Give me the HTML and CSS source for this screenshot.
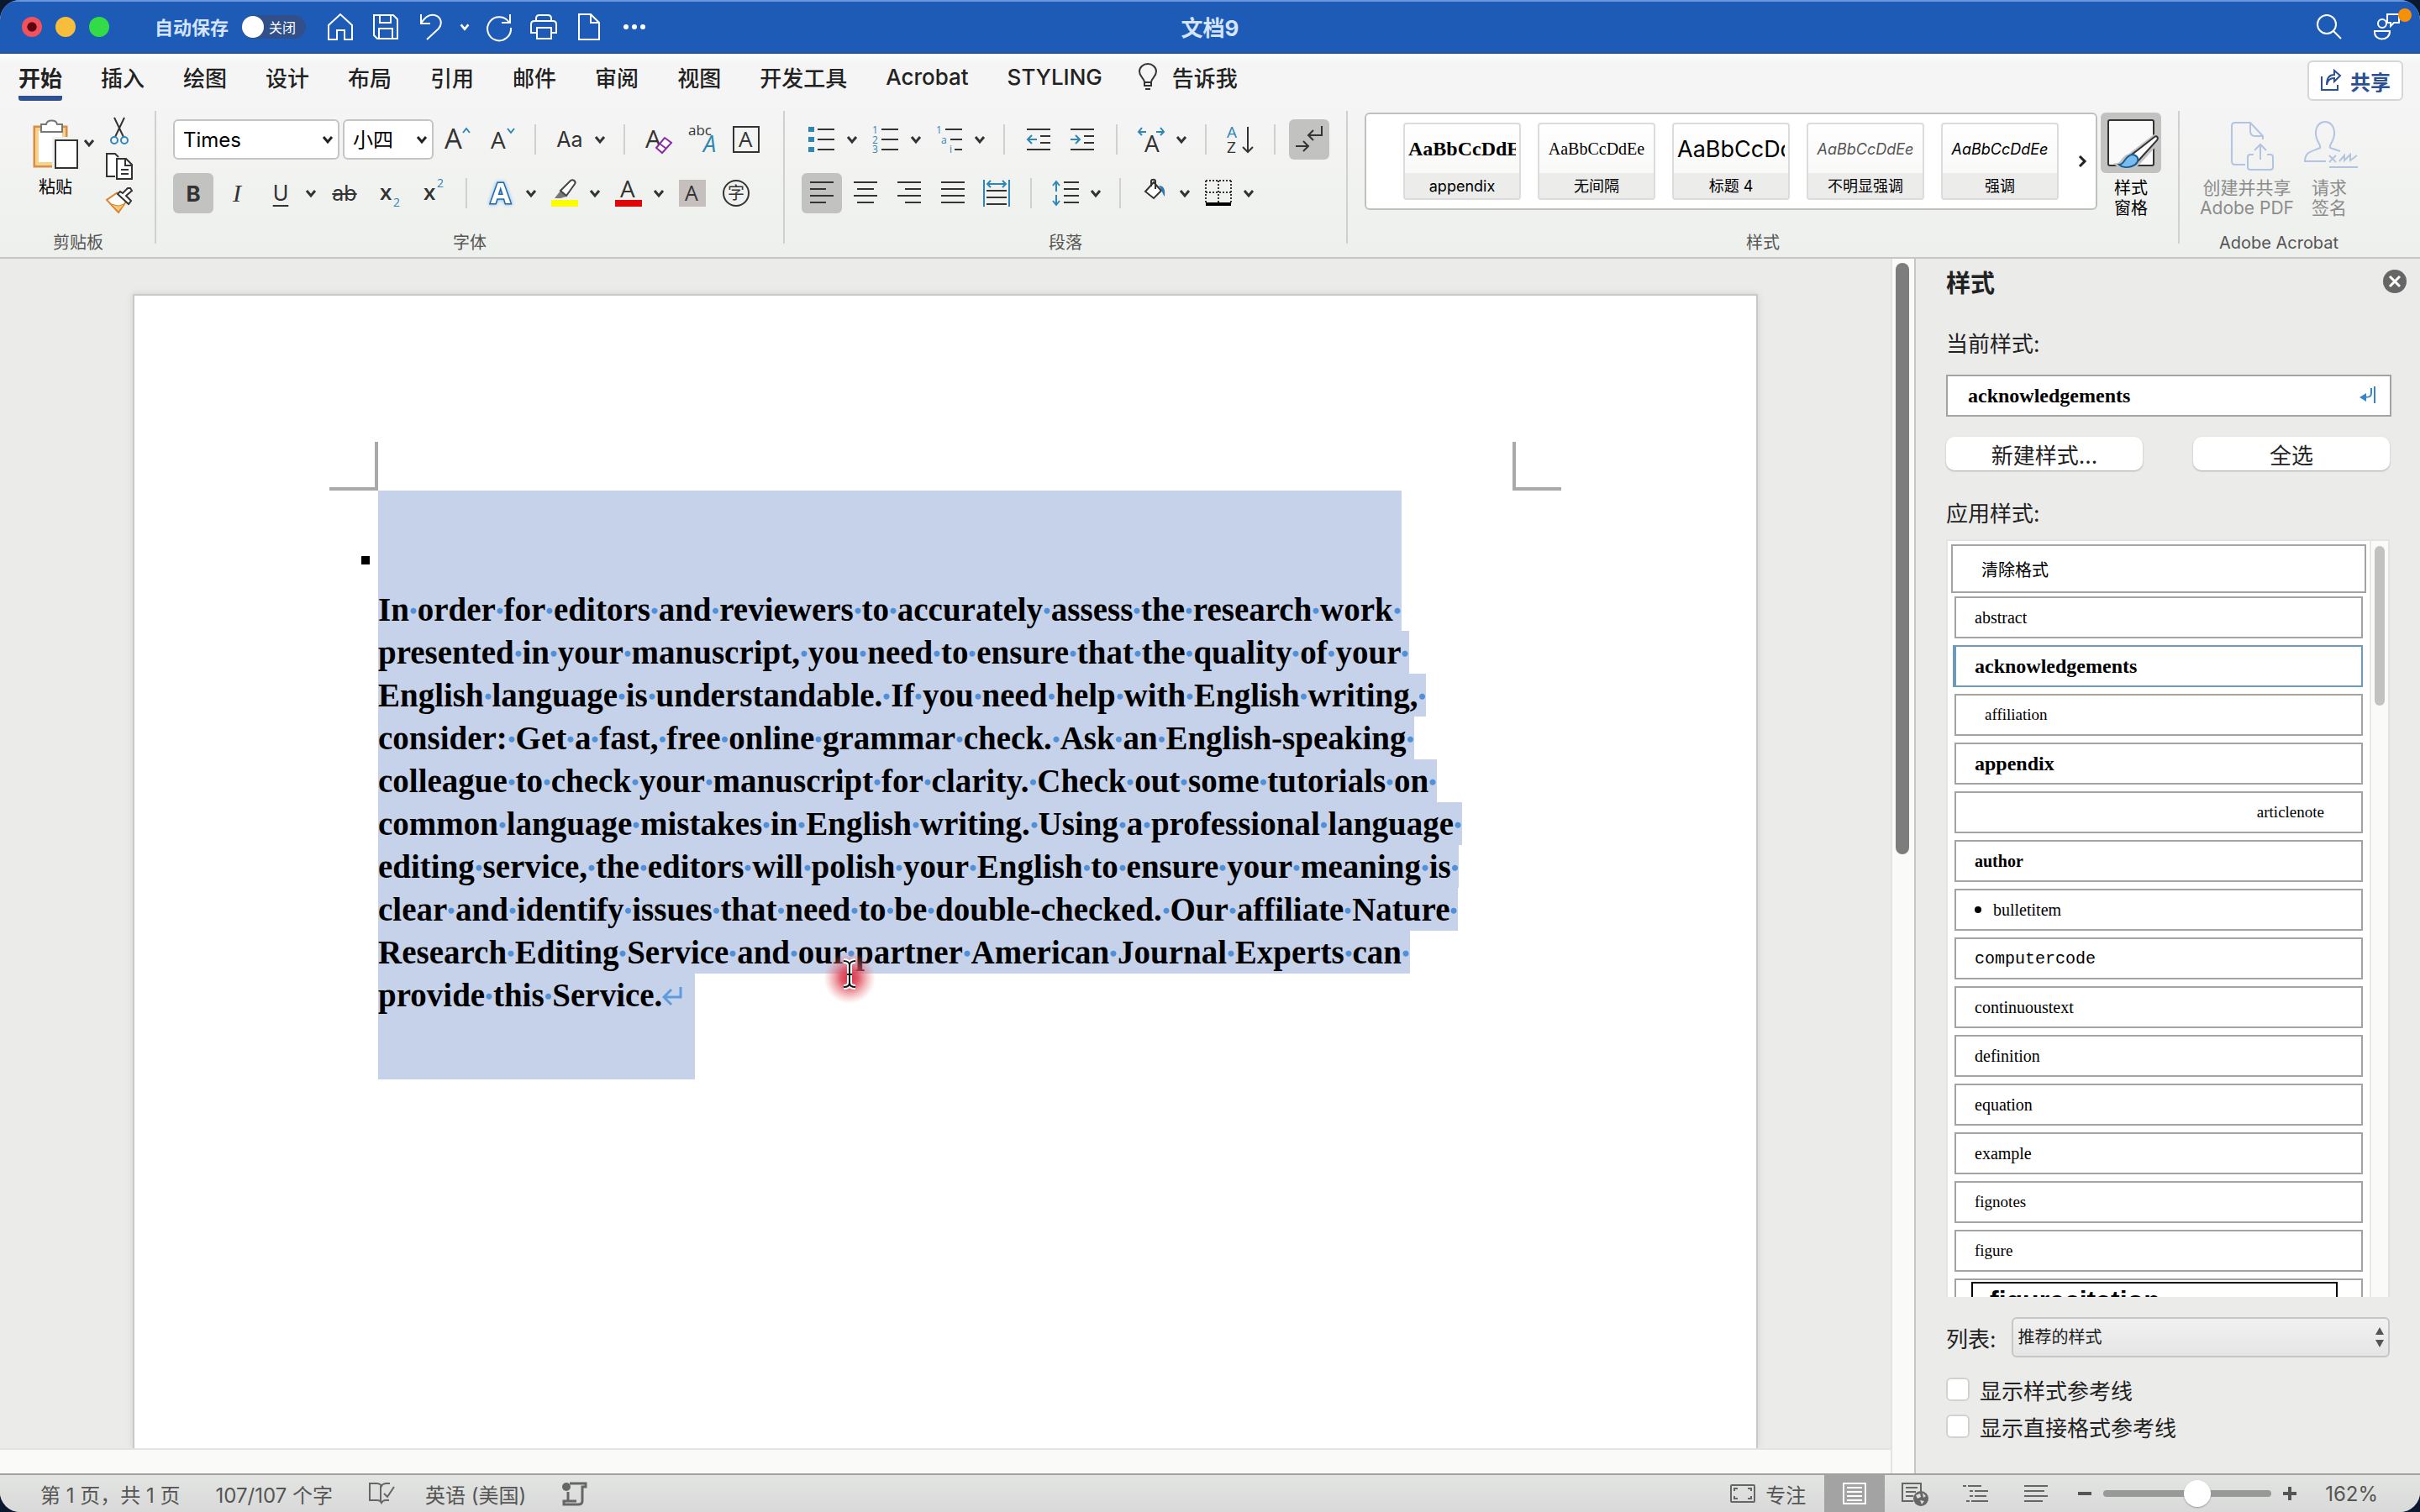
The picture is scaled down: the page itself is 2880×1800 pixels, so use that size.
FILE: index.html
```
<!DOCTYPE html>
<html lang="zh-CN">
<head>
    <meta charset="UTF-8">
    <meta name="viewport" content="width=device-width, initial-scale=1.0">
    <title>文档9</title>
    <link rel="stylesheet" href="styles.css">
</head>
<body>
    <!-- shared symbols -->
    <svg class="symbols" aria-hidden="true">
        <symbol id="caret" viewBox="0 0 16 16"><path d="M3 5l5 6 5-6" fill="none" stroke="currentColor" stroke-width="3"/></symbol>
    </svg>

    <div class="window">
        <header class="titlebar">
            <div class="titlebar-left">
                <div class="lights">
                    <button class="light red" aria-label="关闭"></button>
                    <button class="light yellow" aria-label="最小化"></button>
                    <button class="light green" aria-label="缩放"></button>
                </div>
                <span class="autosave">自动保存</span>
                <button class="toggle"><span class="knob"></span>关闭</button>
                <div class="quick">
                    <button aria-label="主页"><svg viewBox="0 0 32 32"><path d="M2 14L16 1l14 13v17h-9V20h-9v11H2z"/></svg></button>
                    <button aria-label="保存"><svg viewBox="0 0 32 32"><path d="M3 2h22l5 5v23H6l-4-4V2z M9 2v9h13V2 M8 30V18h16v12"/></svg></button>
                    <button aria-label="撤消"><svg viewBox="0 0 32 32"><path d="M4 1v11h11 M4 12C8 5 14 1 20 2c8 2 10 10 5 16L11 31"/></svg></button>
                    <button class="narrow" aria-label="撤消选项"><svg viewBox="0 0 16 16" class="small"><path d="M3 5l5 6 5-6" stroke-width="3"/></svg></button>
                    <button aria-label="重做"><svg viewBox="0 0 32 32"><path d="M30 1v10H20 M29 11A14 14 0 1 0 31 17"/></svg></button>
                    <button aria-label="打印"><svg viewBox="0 0 32 32"><path d="M7 9V6c0-3 1-4 4-4h10c3 0 4 1 4 4v3 M7 23H1V13c0-3 1-4 4-4h22c3 0 4 1 4 4v10h-6 M8 17h17v13H8z"/></svg></button>
                    <button aria-label="新建"><svg viewBox="0 0 32 32"><path d="M4 1h14l10 10v20H4z M18 1v10h10"/></svg></button>
                    <button aria-label="更多"><svg viewBox="0 0 32 32"><g fill="#fff" stroke="none"><circle cx="6" cy="16" r="3"/><circle cx="16" cy="16" r="3"/><circle cx="26" cy="16" r="3"/></g></svg></button>
                </div>
            </div>
            <h1>文档9</h1>
            <div class="titlebar-right">
                <button aria-label="搜索"><svg viewBox="0 0 32 32"><circle cx="13" cy="13" r="11"/><path d="M21 21l9 9"/></svg></button>
                <button class="people" aria-label="共同创作"><svg viewBox="0 0 32 32"><circle cx="11" cy="12" r="5"/><path d="M2 21h18c1 12-19 13-18 0z M17 1h14v10h-6l-4 4v-4h-4z"/></svg><span class="dot"></span></button>
            </div>
        </header>

        <nav class="tabs">
            <button class="tab active">开始</button>
            <button class="tab">插入</button>
            <button class="tab">绘图</button>
            <button class="tab">设计</button>
            <button class="tab">布局</button>
            <button class="tab">引用</button>
            <button class="tab">邮件</button>
            <button class="tab">审阅</button>
            <button class="tab">视图</button>
            <button class="tab">开发工具</button>
            <button class="tab">Acrobat</button>
            <button class="tab">STYLING</button>
            <button class="tab tell"><svg viewBox="0 0 24 32"><path d="M8 23c0-5-6-6-6-13a10 9 0 0 1 20 0c0 7-6 8-6 13z M8 23v4h8v-4 M9 31h6" fill="none" stroke="#333" stroke-width="2"/></svg>告诉我</button>
            <button class="share"><svg viewBox="0 0 26 26"><path d="M2 8v16h19v-6 M8 18c1-6 4-8 9-8V14l7-7-7-6v5C11 6 8 10 8 18z" fill="none" stroke="#2b4f91" stroke-width="2"/></svg>共享</button>
        </nav>

        <div class="ribbon">
            <section class="group clipboard">
                <div class="clip-row">
                    <div class="paste">
                        <button class="paste-btn"><svg viewBox="0 0 56 60"><path d="M3 9h38v47H3z" fill="#fff" stroke="#d98d45" stroke-width="3"/><path d="M6 12h32v41H6z" fill="#fff" stroke="#f6d38c" stroke-width="4"/><path d="M11 6h6c1-6 12-6 13 0h6v9H11z" fill="#fff" stroke="#777" stroke-width="2"/><path d="M24 21h32v39H24z" fill="#f1f2f0"/><path d="M28 25h26v33H28z" fill="#fff" stroke="#333" stroke-width="2"/></svg>粘贴</button>
                        <button class="caret" aria-label="粘贴选项"><svg><use href="#caret"/></svg></button>
                    </div>
                    <div class="clip-tools">
                        <button aria-label="剪切"><svg viewBox="0 0 32 32"><path d="M10 0l11 23 M22 0L11 23" stroke="#333" stroke-width="2"/><g fill="none" stroke="#2e86bd" stroke-width="2"><circle cx="10" cy="27" r="4"/><circle cx="22" cy="27" r="4"/></g></svg></button>
                        <button aria-label="复制"><svg viewBox="0 0 32 32"><g fill="#fff" stroke="#333" stroke-width="2"><path d="M11 28H1V1h10l4 4"/><path d="M13 7h11l7 7v17H13z"/><path d="M23 7v8h8 M18 20h9 M18 25h9" fill="none"/></g></svg></button>
                        <button aria-label="格式刷"><svg viewBox="0 0 32 32"><path d="M14 5L1 14l14 15 9-13" fill="#fff" stroke="#d98431" stroke-width="2"/><path d="M6 19l9 2 7-2-7 9z" fill="#f7c873" stroke="#d98431"/><path d="M14 7l13 12 3-4-6-6 7-6-2-3h-3l-6 6-3-2z" fill="#fff" stroke="#333" stroke-width="2"/></svg></button>
                    </div>
                </div>
                <div class="group-label">剪贴板</div>
            </section>
            <div class="divider"></div>

            <section class="group">
                <div class="tool-row">
                    <div class="combo font-name"><select aria-label="字体"><option>Times</option></select><svg><use href="#caret"/></svg></div>
                    <div class="combo font-size"><select aria-label="字号"><option>小四</option></select><svg><use href="#caret"/></svg></div>
                    <button class="tool" aria-label="增大字号"><svg viewBox="0 0 32 32"><text x="1" y="27" font-size="33" class="glyph">A</text><path d="M23 8l4-5 4 5" class="blue"/></svg></button>
                    <button class="tool" aria-label="减小字号"><svg viewBox="0 0 32 32"><text x="4" y="27" font-size="28" class="glyph">A</text><path d="M24 3l4 5 4-5" class="blue"/></svg></button>
                    <i class="sep"></i>
                    <button class="tool glyph-text">Aa</button><button class="caret" aria-label="更改大小写"><svg><use href="#caret"/></svg></button>
                    <i class="sep"></i>
                    <button class="tool" aria-label="清除格式"><svg viewBox="0 0 32 32"><text x="0" y="26" font-size="30" class="glyph">A</text><path d="M13 26l10-12 8 6-11 12z M17 21l8 6" fill="#fff" stroke="#8b2aa5" stroke-width="2"/></svg></button>
                    <button class="tool" aria-label="拼音指南"><svg viewBox="0 0 32 32"><text x="-1" y="11" font-size="17" class="glyph">abc</text><text x="17" y="31" font-size="27" font-style="italic" class="bluetext">A</text></svg></button>
                    <button class="tool" aria-label="字符边框"><svg viewBox="0 0 32 32"><path d="M1 1h30v30H1z" class="line"/><text x="7" y="25" font-size="26" class="glyph">A</text></svg></button>
                </div>
                <div class="tool-row">
                    <button class="tool on bold">B</button>
                    <button class="tool italic">I</button>
                    <button class="tool under">U</button><button class="caret" aria-label="下划线选项"><svg><use href="#caret"/></svg></button>
                    <button class="tool strike">ab</button>
                    <button class="tool" aria-label="下标"><svg viewBox="0 0 32 32"><text x="6" y="24" font-size="26" font-weight="600" class="glyph">x</text><text x="22" y="32" font-size="14" class="bluetext">2</text></svg></button>
                    <button class="tool" aria-label="上标"><svg viewBox="0 0 32 32"><text x="6" y="24" font-size="26" font-weight="600" class="glyph">x</text><text x="22" y="9" font-size="14" class="bluetext">2</text></svg></button>
                    <i class="sep"></i>
                    <button class="tool" aria-label="文本效果"><svg viewBox="0 0 32 32"><text x="4" y="28" font-size="34" font-weight="700" fill="#fff" stroke="#2068a8" stroke-width="3" paint-order="stroke" class="effect">A</text></svg></button><button class="caret" aria-label="文本效果选项"><svg><use href="#caret"/></svg></button>
                    <button class="tool" aria-label="突出显示"><svg viewBox="0 0 32 32"><path d="M0 24h32v8H0z" fill="#fcfc05"/><path d="M4 22l7-9 7 7-7 2z" fill="#777"/><path d="M11 13L23 1c3-2 7 1 5 4L18 19z" fill="#fff" stroke="#444" stroke-width="2"/></svg></button><button class="caret" aria-label="突出显示颜色"><svg><use href="#caret"/></svg></button>
                    <button class="tool" aria-label="字体颜色"><svg viewBox="0 0 32 32"><path d="M0 24h32v8H0z" fill="#df0808"/><text x="6" y="21" font-size="28" class="glyph">A</text></svg></button><button class="caret" aria-label="字体颜色选项"><svg><use href="#caret"/></svg></button>
                    <button class="tool" aria-label="字符底纹"><svg viewBox="0 0 32 32"><path d="M0 0h32v32H0z" fill="#c5c0be"/><text x="7" y="25" font-size="25" class="glyph">A</text></svg></button>
                    <button class="tool" aria-label="带圈字符"><svg viewBox="0 0 32 32"><circle cx="16" cy="16" r="15" class="line"/><text x="6" y="23" font-size="20" class="glyph">字</text></svg></button>
                </div>
                <div class="group-label">字体</div>
            </section>
            <div class="divider"></div>

            <section class="group">
                <div class="tool-row">
                    <button class="tool" aria-label="项目符号"><svg viewBox="0 0 32 32"><path d="M0 1h7v6H0z M0 13h7v6H0z M0 25h7v6H0z" fill="#2e86b5"/><path d="M11 4h20 M11 16h20 M11 28h20" class="line"/></svg></button><button class="caret" aria-label="项目符号选项"><svg><use href="#caret"/></svg></button>
                    <button class="tool" aria-label="编号"><svg viewBox="0 0 32 32"><g font-size="12" class="bluetext"><text x="0" y="9">1</text><text x="0" y="21">2</text><text x="0" y="32">3</text></g><path d="M11 4h20 M11 16h20 M11 28h20" class="line"/></svg></button><button class="caret" aria-label="编号选项"><svg><use href="#caret"/></svg></button>
                    <button class="tool" aria-label="多级列表"><svg viewBox="0 0 32 32"><g font-size="12" class="bluetext"><text x="0" y="9">1</text><text x="6" y="21">a</text><text x="16" y="32">i</text></g><path d="M11 4h20 M17 16h14 M22 28h9" class="line"/></svg></button><button class="caret" aria-label="多级列表选项"><svg><use href="#caret"/></svg></button>
                    <i class="sep"></i>
                    <button class="tool" aria-label="减少缩进"><svg viewBox="0 0 32 32"><path d="M2 4h28 M18 12h12 M18 20h12 M2 28h28" class="line"/><path d="M14 16H3 M8 11l-5 5 5 5" class="blue"/></svg></button>
                    <button class="tool" aria-label="增加缩进"><svg viewBox="0 0 32 32"><path d="M2 4h28 M18 12h12 M18 20h12 M2 28h28" class="line"/><path d="M2 16h11 M8 11l5 5-5 5" class="blue"/></svg></button>
                    <i class="sep"></i>
                    <button class="tool" aria-label="中文版式"><svg viewBox="0 0 32 32"><path d="M10 7H1 M5 2L1 7l4 4 M22 7h9 M27 2l4 5-4 4" class="blue"/><text x="8" y="31" font-size="28" class="glyph">A</text></svg></button><button class="caret" aria-label="中文版式选项"><svg><use href="#caret"/></svg></button>
                    <i class="sep"></i>
                    <button class="tool" aria-label="排序"><svg viewBox="0 0 32 32"><text x="0" y="14" font-size="19" class="bluetext">A</text><text x="0" y="32" font-size="19" class="glyph">Z</text><path d="M25 1v30 M19 25l6 6 6-6" class="line"/></svg></button>
                    <i class="sep"></i>
                    <button class="tool on" aria-label="显示编辑标记"><svg viewBox="0 0 32 32"><path d="M31 0v11H15 M21 5l-6 6 6 6 M0 24h15 M9 18l6 6-6 6" class="line"/></svg></button>
                </div>
                <div class="tool-row">
                    <button class="tool on" aria-label="左对齐"><svg viewBox="0 0 32 32"><path d="M2 3h28 M2 11h19 M2 19h28 M2 27h19" class="line"/></svg></button>
                    <button class="tool" aria-label="居中"><svg viewBox="0 0 32 32"><path d="M2 3h28 M6 11h20 M2 19h28 M6 27h20" class="line"/></svg></button>
                    <button class="tool" aria-label="右对齐"><svg viewBox="0 0 32 32"><path d="M2 3h28 M11 11h19 M2 19h28 M11 27h19" class="line"/></svg></button>
                    <button class="tool" aria-label="两端对齐"><svg viewBox="0 0 32 32"><path d="M2 3h28 M2 11h28 M2 19h28 M2 27h28" class="line"/></svg></button>
                    <button class="tool" aria-label="分散对齐"><svg viewBox="0 0 32 32"><path d="M1 0v32 M31 0v32 M5 5h22 M9 1L5 5l4 4 M23 1l4 4-4 4" class="blue"/><path d="M4 13h24 M4 21h24 M4 29h24" class="line"/></svg></button>
                    <i class="sep"></i>
                    <button class="tool" aria-label="行距"><svg viewBox="0 0 32 32"><path d="M5 2v12 M1 7l4-5 4 5 M5 18v12 M1 25l4 5 4-5" class="blue"/><path d="M14 3h18 M14 11h18 M14 19h18 M14 27h18" class="line"/></svg></button><button class="caret" aria-label="行距选项"><svg><use href="#caret"/></svg></button>
                    <i class="sep"></i>
                    <button class="tool" aria-label="底纹"><svg viewBox="0 0 32 32"><path d="M5 14L15 3l9 10-9 9z" fill="#fff" stroke="#333" stroke-width="2"/><path d="M12 8V2c0-3 5-3 5 0v9" class="line"/><path d="M21 7c6 0 8 4 7 13-3-4-3-8-7-13z" fill="#2d77b5"/></svg></button><button class="caret" aria-label="底纹选项"><svg><use href="#caret"/></svg></button>
                    <button class="tool" aria-label="边框"><svg viewBox="0 0 32 32"><path d="M1 1h30 M1 1v26 M31 1v26 M16 1v26 M1 15h30" class="line" stroke-dasharray="2 2"/><path d="M1 29h30" stroke="#000" stroke-width="4"/></svg></button><button class="caret" aria-label="边框选项"><svg><use href="#caret"/></svg></button>
                </div>
                <div class="group-label">段落</div>
            </section>
            <div class="divider"></div>

            <section class="group styles-group">
                <div class="gallery-row">
                    <div class="gallery">
                        <button class="card"><span class="sample s-appendix">AaBbCcDdEe</span><span class="card-name">appendix</span></button>
                        <button class="card"><span class="sample s-plain">AaBbCcDdEe</span><span class="card-name">无间隔</span></button>
                        <button class="card"><span class="sample s-heading">AaBbCcDdEe</span><span class="card-name">标题 4</span></button>
                        <button class="card"><span class="sample s-subtle">AaBbCcDdEe</span><span class="card-name">不明显强调</span></button>
                        <button class="card"><span class="sample s-emph">AaBbCcDdEe</span><span class="card-name">强调</span></button>
                        <button class="gallery-next" aria-label="更多样式"><svg viewBox="0 0 16 16"><path d="M5 2l6 6-6 6" fill="none" stroke="#222" stroke-width="3"/></svg></button>
                    </div>
                    <button class="pane-btn"><span class="pane-icon"><svg viewBox="0 0 64 64"><rect x="5" y="5" width="54" height="54" rx="2" fill="#fafafa" stroke="#333" stroke-width="2"/><path d="M60 24c5-2 7 3 4 7L43 54c-8 10-20 9-27 4 6-1 7-10 14-11z" fill="#fff" stroke="#c2c2c2" stroke-width="4"/><path d="M33 46l27-21c3-2 5 1 3 4L41 53z" fill="#fff" stroke="#333" stroke-width="2"/><path d="M18 58c7 0 6-11 16-12 9 2 8 11-1 14-6 2-12 1-15-2z" fill="#79bdf0" stroke="#1a5c91" stroke-width="2"/></svg></span>样式<br>窗格</button>
                </div>
                <div class="group-label">样式</div>
            </section>
            <div class="divider"></div>

            <section class="group">
                <div class="acrobat">
                    <button disabled><svg viewBox="-8 0 64 64"><g fill="none" stroke="#b3c4e2" stroke-width="2"><path d="M22 54H10c-3 0-4-1-4-4V8c0-3 1-4 4-4h18l15 16v4 M28 4v10c0 4 2 6 6 6h9 M32 42h-4c-2 0-3 1-3 3v12c0 2 1 3 3 3h24c2 0 3-1 3-3V45c0-2-1-3-3-3h-4 M40 48V30 M33 37l7-7 7 7"/></g></svg>创建并共享<br>Adobe PDF</button>
                    <button disabled><svg viewBox="-2 0 64 64"><g fill="none" stroke="#b3c4e2" stroke-width="2"><path d="M26 50H1c0-12 10-12 18-16 2-4-6-8-5-19C15-1 35-1 36 15c1 11-7 15-5 19l12 4 M30 43l8 8 M38 43l-8 8 M42 50l6-7v6l7-7v7l8-6 M30 57h34"/></g></svg>请求<br>签名</button>
                </div>
                <div class="group-label">Adobe Acrobat</div>
            </section>
        </div>

        <div class="workspace">
            <div class="editor">
                <div class="canvas">
                    <div class="page">
                        <div class="corners"><span class="corner left"></span><span class="corner right"></span></div>
                        <div class="text">
                            <span class="outline-mark"></span>
                            <p>
                                <span class="ln first">In order for editors and reviewers to accurately assess the research work </span>
                                <span class="ln">presented in your manuscript, you need to ensure that the quality of your </span>
                                <span class="ln">English language is understandable. If you need help with English writing, </span>
                                <span class="ln">consider: Get a fast, free online grammar check. Ask an English-speaking </span>
                                <span class="ln">colleague to check your manuscript for clarity. Check out some tutorials on </span>
                                <span class="ln">common language mistakes in English writing. Using a professional language </span>
                                <span class="ln">editing service, the editors will polish your English to ensure your meaning is </span>
                                <span class="ln">clear and identify issues that need to be double-checked. Our affiliate Nature </span>
                                <span class="ln">Research Editing Service and our partner American Journal Experts can </span>
                                <span class="ln last">provide this Service.<svg viewBox="0 0 24 24"><path d="M22 1v12H2 M11 4l-9 9 9 9" fill="none" stroke="#5b9be0" stroke-width="3"/></svg></span>
                            </p>
                            <svg class="ibeam" viewBox="0 0 64 72"><defs><radialGradient id="press"><stop offset="0" stop-color="#d8283c"/><stop offset=".35" stop-color="#dd4456" stop-opacity=".85"/><stop offset="1" stop-color="#e88" stop-opacity="0"/></radialGradient></defs><circle cx="32" cy="40" r="31" fill="url(#press)"/><g fill="none"><path d="M25 20c4 0 7 2 7 5 0-3 3-5 7-5 M32 25v22 M25 51c4 0 7-1 7-5 0 4 3 5 7 5 M29 36h6" stroke="#fff" stroke-width="6"/><path d="M25 20c4 0 7 2 7 5 0-3 3-5 7-5 M32 25v22 M25 51c4 0 7-1 7-5 0 4 3 5 7 5 M29 36h6" stroke="#111" stroke-width="2"/></g></svg>
                        </div>
                    </div>
                </div>
                <div class="hscroll"></div>
            </div>
            <div class="vscroll"><div class="thumb"></div></div>

            <aside class="panel">
                <div class="panel-head">
                    <h2>样式</h2>
                    <button class="close" aria-label="关闭窗格"><svg viewBox="0 0 28 28"><circle cx="14" cy="14" r="14" fill="#666"/><path d="M8 8l12 12 M20 8L8 20" stroke="#fff" stroke-width="3"/></svg></button>
                </div>
                <label class="panel-label" for="current">当前样式:</label>
                <div class="current">
                    <input id="current" type="text" value="acknowledgements">
                    <svg viewBox="0 0 20 20"><path d="M18 0v20 M14 2v6c0 4-2 5-8 5" fill="none" stroke="#3a84c6" stroke-width="2"/><path d="M0 13l8-5v10z" fill="#3a84c6"/></svg>
                </div>
                <div class="panel-buttons">
                    <button>新建样式...</button>
                    <button>全选</button>
                </div>
                <div class="panel-label">应用样式:</div>
                <div class="list">
                    <div class="items">
                        <button class="item clear">清除格式</button>
                        <button class="item">abstract</button>
                        <button class="item strong selected">acknowledgements</button>
                        <button class="item note indent">affiliation</button>
                        <button class="item strong">appendix</button>
                        <button class="item note right">articlenote</button>
                        <button class="item author">author</button>
                        <button class="item"><span class="bullet"></span>bulletitem</button>
                        <button class="item code">computercode</button>
                        <button class="item">continuoustext</button>
                        <button class="item">definition</button>
                        <button class="item">equation</button>
                        <button class="item">example</button>
                        <button class="item note">fignotes</button>
                        <button class="item note">figure</button>
                        <button class="item citation"><span>figurecitation</span></button>
                    </div>
                    <div class="list-scroll"><div class="list-thumb"></div></div>
                </div>
                <div class="filter">
                    <label for="filter">列表:</label>
                    <div class="filter-box">
                        <select id="filter"><option>推荐的样式</option></select>
                        <svg viewBox="0 0 12 26"><path d="M6 1l5 9H1z M6 25l5-9H1z" fill="#555"/></svg>
                    </div>
                </div>
                <label class="check"><input type="checkbox">显示样式参考线</label>
                <label class="check"><input type="checkbox">显示直接格式参考线</label>
            </aside>
        </div>

        <footer class="status">
            <span>第 1 页，共 1 页</span>
            <span>107/107 个字</span>
            <button aria-label="拼写检查"><svg viewBox="0 0 32 28"><path d="M26 2h-4c-3 0-5 1-6 3-1-2-3-3-6-3H2v20h9c2 0 4 1 5 3 1-2 3-3 5-3h4 M15 5v19 M19 14l4 4 8-12" fill="none" stroke="#666" stroke-width="2"/></svg></button>
            <span>英语 (美国)</span>
            <button aria-label="宏"><svg viewBox="0 0 32 28"><circle cx="6" cy="6" r="5" fill="#666"/><path d="M8 12v12 M10 2h19v4h-4v17c0 3-2 4-5 4H3v-4h15" fill="none" stroke="#666" stroke-width="3"/></svg></button>
            <div class="views">
                <button class="focus"><svg viewBox="0 0 30 22"><rect x="1" y="1" width="28" height="20" rx="1" fill="none" stroke="#666" stroke-width="2"/><path d="M5 8V5h4 M21 5h4v3 M5 14v3h4 M25 14v3h-4" fill="none" stroke="#666" stroke-width="2"/></svg>专注</button>
                <button class="view on" aria-label="页面视图"><svg viewBox="0 0 32 32"><path d="M3 4h26v24H3z M7 9h18 M7 14h18 M7 19h18 M7 24h18" fill="none" stroke="#fff" stroke-width="2"/></svg></button>
                <button class="view" aria-label="Web 版式"><svg viewBox="0 0 32 32"><path d="M14 25H1V4h22v10 M5 9h14 M5 14h12 M5 19h9" fill="none" stroke="#666" stroke-width="2"/><circle cx="23" cy="22" r="9" fill="#666"/><path d="M17 18l5-2 1 4-4 2z M25 15l4 4-3 2z M22 24l5 1-3 4z" fill="#ddd"/></svg></button>
                <button class="view" aria-label="大纲"><svg viewBox="0 0 32 32"><path d="M1 7h4 M7 7h16 M9 13h4 M15 13h16 M9 19h4 M15 19h14 M5 25h4 M11 25h20" stroke="#666" stroke-width="2"/></svg></button>
                <button class="view" aria-label="草稿"><svg viewBox="0 0 32 32"><path d="M2 7h28 M2 13h24 M2 19h28 M2 25h22" stroke="#666" stroke-width="2"/></svg></button>
                <div class="zoom-box">
                    <button class="zoom-btn" aria-label="缩小"><svg viewBox="0 0 16 16"><path d="M0 8h16" stroke="#555" stroke-width="4"/></svg></button>
                    <input class="zoom" type="range" min="0" max="100" value="57" aria-label="缩放">
                    <button class="zoom-btn" aria-label="放大"><svg viewBox="0 0 16 16"><path d="M0 8h16 M8 0v16" stroke="#555" stroke-width="4"/></svg></button>
                </div>
                <span class="percent">162%</span>
            </div>
        </footer>
    </div>

    <script>
        // show a dot for every space in the document text
        document.querySelectorAll('.ln').forEach(line => {
            line.innerHTML = line.innerHTML.replace(/ (?![^<]*>)/g, '<i> </i>');
        });
    </script>
</body>
</html>
```
FILE: styles.css
```
* {
    box-sizing: border-box;
}
body {
    margin: 0;
    background: #0a1830;
    color: #222;
    font-family: Inter, "Noto Sans CJK SC", sans-serif;
}
button {
    display: flex;
    align-items: center;
    justify-content: center;
    margin: 0;
    padding: 0;
    border: none;
    background: none;
    color: inherit;
    font: inherit;
}
button svg {
    display: block;
    overflow: visible;
    flex: none;
}
.symbols {
    position: absolute;
    width: 0;
    height: 0;
}
.window {
    display: flex;
    flex-direction: column;
    height: 100vh;
    border-radius: 24px;
    overflow: hidden;
    background: #ebebea;
}

/* title bar */
.titlebar {
    display: grid;
    grid-template-columns: 1fr auto 1fr;
    align-items: center;
    height: 64px;
    border-top: 2px solid #6d97dc;
    border-bottom: 2px solid #285394;
    background: #1e5bb7;
    color: #d5e4ff;
}
.titlebar h1 {
    margin: 0;
    padding-bottom: 2px;
    font-size: 26px;
    font-weight: 700;
}
.titlebar-left,
.titlebar-right,
.quick,
.lights {
    display: flex;
    align-items: center;
}
.lights {
    gap: 16px;
    padding-left: 26px;
}
.light {
    width: 24px;
    height: 24px;
    border-radius: 50%;
}
.red {
    background: radial-gradient(#5c0510 30%, #f2525b 36%);
}
.yellow {
    background: #f6be3c;
}
.green {
    background: #33dc47;
}
.autosave {
    margin-left: 54px;
    padding-bottom: 2px;
    font-size: 22px;
    font-weight: 600;
}
.toggle {
    gap: 6px;
    width: 76px;
    height: 28px;
    margin: 0 14px 0 16px;
    padding-right: 12px;
    border-radius: 14px;
    background: #31508a;
    color: #fff;
    font-size: 16px;
    white-space: nowrap;
}
.knob {
    flex: none;
    width: 26px;
    height: 26px;
    border-radius: 50%;
    background: #fff;
}
.quick button {
    width: 54px;
    height: 48px;
}
.quick .narrow {
    width: 26px;
}
.titlebar svg {
    width: 32px;
    height: 32px;
    fill: none;
    stroke: #fff;
    stroke-width: 2;
}
.titlebar .small {
    width: 14px;
    height: 14px;
}
.titlebar-right {
    justify-content: flex-end;
    gap: 36px;
    padding-right: 24px;
}
.people {
    position: relative;
}
.dot {
    position: absolute;
    top: -6px;
    right: -14px;
    width: 16px;
    height: 16px;
    border-radius: 50%;
    background: #f79009;
}

/* tabs */
.tabs {
    display: flex;
    align-items: center;
    gap: 46px;
    height: 62px;
    padding: 0 20px 6px 22px;
    background: linear-gradient(#fbfffe, #f5f5f5 10px);
    font-size: 26px;
    font-weight: 500;
}
.tab {
    height: 56px;
    border-bottom: 6px solid transparent;
    border-top: 4px solid transparent;
}
.tab.active {
    border-bottom-color: #2f5191;
    border-radius: 3px;
    font-weight: 700;
}
.tell {
    gap: 17px;
    margin-left: -4px;
}
.tell svg {
    width: 24px;
    height: 32px;
}
.share {
    gap: 10px;
    align-self: flex-end;
    width: 114px;
    height: 48px;
    margin-left: auto;
    border: 2px solid #d6d6d6;
    border-radius: 6px;
    background: #fff;
    color: #2b4f91;
    font-size: 24px;
    font-weight: 700;
}
.share svg {
    width: 26px;
    height: 26px;
}

/* ribbon */
.ribbon {
    display: flex;
    height: 182px;
    border-bottom: 2px solid #c6c6c6;
    background: linear-gradient(#f4f5f4, #eef0ed);
}
.group {
    display: flex;
    flex-direction: column;
    gap: 16px;
    padding-top: 16px;
}
.divider {
    width: 2px;
    height: 158px;
    margin: 6px 20px 0;
    background: #d0d1cf;
}
.group-label {
    margin-top: auto;
    padding-bottom: 4px;
    color: #555;
    font-size: 20px;
    line-height: 26px;
    text-align: center;
}
.tool-row {
    display: flex;
    gap: 4px;
    height: 48px;
}
.tool {
    width: 48px;
    height: 48px;
    border-radius: 6px;
    color: #333;
}
.tool svg {
    width: 32px;
    height: 32px;
}
.on {
    background: #c2c3c1;
}
.caret {
    width: 16px;
    margin-right: 4px;
    color: #333;
}
.caret svg {
    width: 16px;
    height: 16px;
}
.sep {
    width: 2px;
    height: 36px;
    margin: 6px 12px;
    background: #d0d1cf;
}
.glyph {
    fill: #333;
    font-family: "Open Sans", "Noto Sans CJK SC", sans-serif;
}
.bluetext {
    fill: #2e86b5;
    font-family: "Open Sans", sans-serif;
}
.effect {
    font-family: "Open Sans", sans-serif;
    filter: drop-shadow(0 0 2px #6fb0e6);
}
.line {
    fill: none;
    stroke: #333;
    stroke-width: 2;
}
.blue {
    fill: none;
    stroke: #2e86b5;
    stroke-width: 2;
}
.glyph-text,
.italic,
.under,
.strike {
    font-size: 25px;
}
.bold {
    font-size: 26px;
    font-weight: 700;
}
.italic {
    font-family: "Liberation Serif", serif;
    font-size: 30px;
    font-style: italic;
}
.under {
    text-decoration: underline;
    text-underline-offset: 5px;
}
.strike {
    text-decoration: line-through;
}
.combo {
    position: relative;
    width: 198px;
}
.font-size {
    width: 108px;
}
.combo select {
    width: 100%;
    height: 48px;
    padding: 0 10px;
    border: 2px solid #c4c4c4;
    border-radius: 6px;
    appearance: none;
    background: #fff;
    color: #000;
    font: inherit;
    font-size: 24px;
}
.combo svg {
    position: absolute;
    top: 16px;
    right: 6px;
    width: 16px;
    height: 16px;
}

/* clipboard group */
.clipboard {
    padding-left: 34px;
}
.clipboard .group-label {
    padding-right: 12px;
}
.clip-row,
.paste {
    display: flex;
}
.paste-btn {
    flex-direction: column;
    justify-content: flex-start;
    gap: 8px;
    width: 64px;
    height: 110px;
    color: #000;
    font-size: 20px;
    line-height: 26px;
}
.paste-btn svg {
    width: 56px;
    height: 60px;
}
.paste .caret {
    height: 56px;
}
.clip-tools {
    display: flex;
    flex-direction: column;
    gap: 10px;
    width: 46px;
    margin-top: -2px;
    padding-left: 8px;
}
.clip-tools button,
.clip-tools svg {
    width: 32px;
    height: 32px;
}

/* styles gallery */
.styles-group {
    flex: 1;
    min-width: 0;
    padding-top: 8px;
}
.gallery-row {
    display: flex;
    gap: 4px;
}
.gallery {
    display: flex;
    flex: 1;
    gap: 20px;
    min-width: 0;
    height: 116px;
    padding: 10px 0 10px 44px;
    border: 2px solid #bfc1bf;
    border-radius: 6px;
    background: #fff;
}
.card {
    flex: 1;
    flex-direction: column;
    min-width: 0;
    border: 2px solid #dcdcdc;
    border-radius: 4px;
    background: linear-gradient(#fff, #f5f6f4);
    color: #000;
}
.sample {
    display: flex;
    flex: 1;
    align-items: center;
    justify-content: center;
    align-self: stretch;
    margin: 0 4px;
    overflow: hidden;
}
.card-name {
    align-self: stretch;
    padding-top: 2px;
    background: #ececeb;
    font-size: 18px;
    line-height: 28px;
}
.s-appendix {
    justify-content: flex-start;
    font: bold 24px "Liberation Serif", serif;
}
.s-plain {
    font: 20px "Liberation Serif", serif;
}
.s-heading {
    justify-content: flex-start;
    font-size: 27px;
}
.s-subtle {
    color: #555;
    font-size: 18px;
    font-style: italic;
}
.s-emph {
    font-size: 18px;
    font-style: italic;
}
.gallery-next {
    width: 16px;
    margin-right: 8px;
}
.gallery-next svg {
    width: 16px;
    height: 16px;
}
.pane-btn {
    display: block;
    width: 72px;
    color: #000;
    font-size: 20px;
    line-height: 24px;
}
.pane-icon {
    display: flex;
    align-items: center;
    justify-content: center;
    width: 72px;
    height: 72px;
    margin-bottom: 6px;
    border-radius: 6px;
    background: #c2c3c1;
}
.pane-icon svg {
    width: 64px;
    height: 64px;
}

/* acrobat */
.acrobat {
    display: flex;
    margin-right: 70px;
}
.acrobat + .group-label {
    padding-right: 70px;
}
.acrobat button {
    display: block;
    width: 120px;
    color: #8c8c8c;
    font-size: 21px;
    line-height: 24px;
    white-space: nowrap;
}
.acrobat button + button {
    width: 76px;
}
.acrobat svg {
    width: 64px;
    height: 64px;
    margin: 0 auto 6px;
}

/* document */
.workspace {
    display: flex;
    flex: 1;
    min-height: 0;
}
.editor {
    display: flex;
    flex: 1;
    flex-direction: column;
    min-width: 0;
}
.canvas {
    flex: 1;
    min-height: 0;
    overflow: hidden;
    padding: 42px 158px 0;
    background: #ebebea;
}
.page {
    height: 100%;
    padding-top: 174px;
    border: 2px solid #c9c9c9;
    border-bottom: none;
    background: #fff;
    box-shadow: 0 0 8px #d0d0d0;
}
.corners {
    display: flex;
    justify-content: space-between;
    padding: 0 232px;
}
.corner {
    width: 58px;
    height: 58px;
    border-bottom: 4px solid #a9a9a9;
}
.corner.left {
    border-right: 4px solid #a9a9a9;
}
.corner.right {
    border-left: 4px solid #a9a9a9;
}
.text {
    position: relative;
    padding-left: 290px;
}
.text p {
    display: flex;
    flex-direction: column;
    align-items: flex-start;
    margin: 0;
    color: #000;
    font: bold 39px/51px "Liberation Serif", serif;
    white-space: pre;
}
.ln {
    background: #c6d2ea;
}
.ln.first {
    padding-top: 116px;
}
.ln.last {
    padding: 0 15px 75px 0;
}
.ln i {
    background: radial-gradient(circle at 50% 54%, #4f90d9 3px, transparent 4px);
}
.ln svg {
    width: 24px;
    height: 24px;
}
.outline-mark {
    position: absolute;
    top: 78px;
    left: 270px;
    width: 10px;
    height: 10px;
    background: #000;
}
.ibeam {
    position: absolute;
    top: 540px;
    left: 819px;
    width: 64px;
    height: 72px;
}
.hscroll {
    height: 30px;
    border-top: 2px solid #e3e3e3;
    background: #fafaf9;
}
.vscroll {
    width: 28px;
    padding: 5px 4px;
    border-left: 2px solid #e3e3e3;
    background: #fafaf9;
}
.thumb {
    width: 16px;
    height: 49%;
    border-radius: 8px;
    background: #7d7d7d;
}

/* styles pane */
.panel {
    display: flex;
    flex-direction: column;
    width: 602px;
    padding: 6px 34px 42px 36px;
    border-left: 2px solid #c6c6c6;
    font-size: 26px;
}
.panel-head {
    display: flex;
    align-items: center;
    justify-content: space-between;
    height: 42px;
    margin-right: -18px;
}
.panel-head h2 {
    margin: 0;
    font-size: 29px;
}
.close svg {
    width: 28px;
    height: 28px;
}
.panel-label {
    margin-top: 38px;
    line-height: 32px;
}
.current {
    position: relative;
    margin-top: 20px;
}
.current input {
    display: block;
    width: 100%;
    height: 50px;
    padding: 0 24px;
    border: 2px solid #a3a3a3;
    background: #fff;
    color: #000;
    font: bold 24px "Liberation Serif", serif;
}
.current svg {
    position: absolute;
    top: 14px;
    right: 18px;
    width: 20px;
    height: 20px;
}
.panel-buttons {
    display: flex;
    justify-content: space-between;
    margin: 24px 2px 0 0;
}
.panel-buttons button {
    width: 234px;
    height: 40px;
    border-radius: 10px;
    background: #fff;
    box-shadow: 0 1px 2px #aaa;
}
.panel-buttons + .panel-label {
    margin-top: 36px;
}
.list {
    display: flex;
    flex: 1;
    min-height: 0;
    margin: 14px 2px 0 0;
    border: 2px solid #e3e3e3;
    border-bottom: none;
    background: #fff;
    overflow: hidden;
}
.items {
    display: flex;
    flex: 1;
    flex-direction: column;
    gap: 8px;
    padding: 4px 8px;
}
.item {
    flex: none;
    justify-content: flex-start;
    height: 50px;
    padding-left: 22px;
    border: 2px solid #a3a3a3;
    background: #fff;
    color: #000;
    font-family: "Liberation Serif", serif;
    font-size: 20px;
}
.item.clear {
    height: 58px;
    margin: 0 -4px -4px;
    padding-left: 34px;
    font-family: "Noto Sans CJK SC", sans-serif;
}
.item.strong {
    font-size: 24px;
    font-weight: 700;
}
.item.author {
    font-weight: 700;
}
.item.selected {
    border-color: #6f9ab8;
    border-left-width: 4px;
    margin-left: -2px;
}
.item.note {
    font-size: 19px;
}
.item.indent {
    padding-left: 34px;
}
.item.right {
    justify-content: flex-end;
    padding-right: 44px;
}
.item.code {
    font-family: "Liberation Mono", monospace;
}
.bullet {
    width: 8px;
    height: 8px;
    margin-right: 14px;
    border-radius: 50%;
    background: #000;
}
.item.citation {
    height: 80px;
    padding: 2px 28px 2px 18px;
}
.citation span {
    flex: 1;
    height: 72px;
    padding-left: 20px;
    border: 2px solid #000;
    font: bold 32px/40px "Liberation Sans", sans-serif;
    text-align: left;
}
.list-scroll {
    width: 22px;
    padding: 6px 4px;
    border-left: 2px solid #e8e8e8;
    background: #fafaf9;
}
.list-thumb {
    width: 12px;
    height: 190px;
    border-radius: 6px;
    background: #c2c2c1;
}
.filter {
    display: flex;
    align-items: center;
    gap: 18px;
    margin: 24px 2px 24px 0;
}
.filter-box {
    position: relative;
    flex: 1;
}
.filter-box select {
    display: block;
    width: 100%;
    height: 48px;
    padding: 0 6px;
    border: 2px solid #c6c6c6;
    border-radius: 6px;
    appearance: none;
    background: linear-gradient(#f0f1f0, #e4e5e4);
    color: #222;
    font: inherit;
    font-size: 20px;
}
.filter-box svg {
    position: absolute;
    top: 11px;
    right: 6px;
    width: 12px;
    height: 26px;
}
.check {
    display: flex;
    align-items: center;
    gap: 12px;
    height: 28px;
}
.check + .check {
    margin-top: 16px;
}
.check input {
    width: 28px;
    height: 28px;
    margin: 0;
    border: 2px solid #d2d2d2;
    border-radius: 6px;
    appearance: none;
    background: #fff;
}

/* status bar */
.status {
    display: flex;
    align-items: center;
    gap: 42px;
    height: 46px;
    padding-left: 48px;
    border-top: 2px solid #a2a2a2;
    background: linear-gradient(#e3e5e3, #d8d9d8);
    color: #555;
    font-size: 24px;
}
.status svg {
    width: 32px;
    height: 28px;
}
.status > button {
    margin-right: -6px;
}
.views {
    display: flex;
    align-items: center;
    align-self: stretch;
    margin-left: auto;
    padding-right: 50px;
}
.focus {
    gap: 12px;
    margin-right: 22px;
}
.views .focus svg {
    width: 30px;
    height: 22px;
}
.view {
    align-self: stretch;
    width: 72px;
}
.view.on {
    background: #a3a3a3;
}
.view svg {
    width: 32px;
    height: 32px;
}
.zoom-box {
    display: flex;
    align-items: center;
    gap: 14px;
    margin-left: 14px;
}
.zoom-btn,
.status .zoom-btn svg {
    width: 16px;
    height: 16px;
}
.zoom {
    width: 200px;
    height: 32px;
    margin: 0;
    appearance: none;
    background: none;
}
.zoom::-webkit-slider-runnable-track {
    height: 8px;
    border-radius: 4px;
    background: #989a98;
}
.zoom::-webkit-slider-thumb {
    width: 32px;
    height: 32px;
    margin-top: -12px;
    border-radius: 50%;
    appearance: none;
    background: #fff;
    box-shadow: 0 1px 2px #999;
}
.percent {
    margin-left: 34px;
}
```
